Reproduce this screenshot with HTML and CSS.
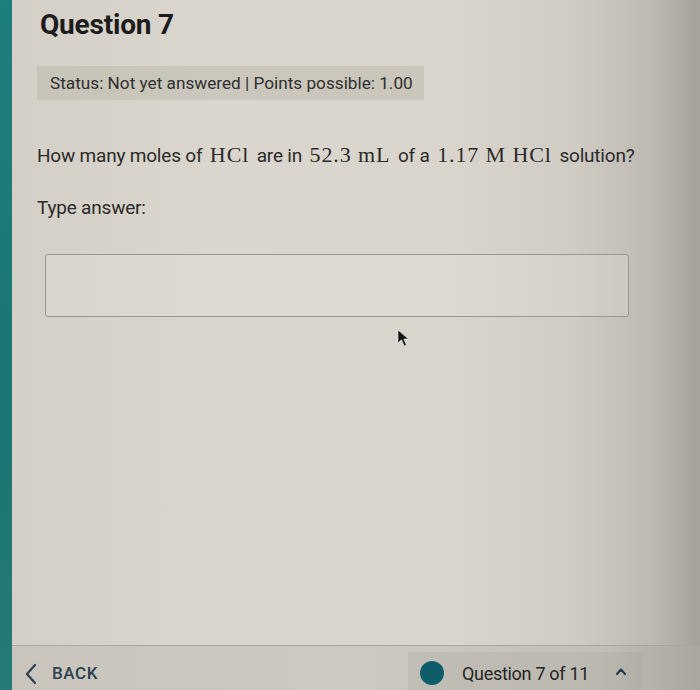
FILE: index.html
```html
<!DOCTYPE html>
<html>
<head>
<meta charset="utf-8">
<link rel="stylesheet" href="styles.css">
</head>
<body>
<div class="screen">
  <div class="strip"></div>
  <div class="main">
    <div class="content">
      <h1 class="title">Question 7</h1>
      <div class="status">Status: Not yet answered | Points possible: 1.00</div>
      <p class="question">How many moles of <span class="m">HCl</span> are in <span class="m">52.3 mL</span> of a <span class="m">1.17 M HCl</span> solution?</p>
      <p class="label">Type answer:</p>
      <div class="answer"></div>
      <svg class="cursor" width="14" height="18" viewBox="0 0 14 18"><path d="M1 1 L1 14 L4.5 10.8 L7.2 17 L9.4 16 L6.8 10 L11.5 10 Z" fill="#111" stroke="#eee" stroke-width="0.6"/></svg>
    </div>
    <div class="footer">
      <div class="back">
        <svg class="chev" width="14" height="22" viewBox="0 0 14 22"><path d="M11 2 L3 11 L11 20" fill="none" stroke="#2b3f4f" stroke-width="2.2" stroke-linecap="round" stroke-linejoin="round"/></svg>
        <span>BACK</span>
      </div>
      <div class="nav">
        <span class="dot"></span>
        <span class="qof">Question 7 of 11</span>
        <svg class="caret" width="12" height="8" viewBox="0 0 12 8"><path d="M2 7 L6 2.5 L10 7" fill="none" stroke="#1f3a4a" stroke-width="2" stroke-linecap="round" stroke-linejoin="round"/></svg>
      </div>
    </div>
  </div>
</div>
</body>
</html>
```

FILE: styles.css
```css
html, body {
  margin: 0;
  padding: 0;
}
body {
  width: 700px;
  height: 690px;
  overflow: hidden;
  font-family: Roboto, "Liberation Sans", sans-serif;
  color: #2a2a2a;
}
.screen {
  display: flex;
  width: 700px;
  height: 690px;
  background: linear-gradient(90deg, #d4cfc6 0%, #dbd6cd 30%, #dad5cc 65%, #d0ccc3 82%, #bdbab2 93%, #a4a19a 100%);
}
.strip {
  width: 12px;
  flex: none;
  background: linear-gradient(180deg, #1f7f7c 0%, #1b7572 60%, #257a76 100%);
}
.main {
  flex: 1;
  display: flex;
  flex-direction: column;
}
.content {
  flex: 1;
  position: relative;
  padding: 0 0 0 25px;
}
.title {
  margin: 9px 0 0 3px;
  font-size: 28px;
  font-weight: 700;
  color: #1c1c1c;
  line-height: 32px;
  letter-spacing: -0.2px;
}
.status {
  display: inline-block;
  margin-top: 25px;
  padding: 0 11px 0 13px;
  height: 34px;
  line-height: 35px;
  background: rgba(160, 160, 145, 0.28);
  font-size: 17.2px;
  color: #2f2f2f;
}
.question {
  margin: 42px 0 0 0;
  font-size: 19px;
  color: #2a2a2a;
  letter-spacing: -0.2px;
}
.m {
  font-family: "Liberation Serif", "DejaVu Serif", serif;
  font-size: 22px;
  letter-spacing: 0.9px;
  margin: 0 3px;
}
.label {
  margin: 28px 0 0 0;
  font-size: 19px;
  color: #2a2a2a;
  letter-spacing: -0.2px;
}
.answer {
  margin: 35px 0 0 8px;
  width: 582px;
  height: 61px;
  border: 1.5px solid #9a978f;
  border-radius: 3px;
  background: rgba(230, 226, 218, 0.25);
}
.cursor {
  position: absolute;
  left: 385px;
  top: 329px;
}
.footer {
  flex: none;
  height: 44px;
  border-top: 1.5px solid #aaa69f;
  background: linear-gradient(90deg, #c9c5bd 0%, #cdc9c1 50%, #c3c0b8 85%, #a9a69f 100%);
  display: flex;
  align-items: flex-end;
  justify-content: space-between;
}
.back {
  display: flex;
  align-items: center;
  height: 34px;
  margin-left: 12px;
  gap: 14px;
  color: #2b3f4f;
  font-size: 17px;
  font-weight: 500;
  letter-spacing: 0.6px;
}
.chev {
  margin-top: 1px;
}
.nav {
  display: flex;
  align-items: center;
  height: 38px;
  width: 235px;
  margin-right: 57px;
  background: rgba(150, 148, 140, 0.18);
  padding-left: 12px;
  padding-top: 4px;
  box-sizing: border-box;
}
.dot {
  width: 24px;
  height: 24px;
  border-radius: 50%;
  background: #0f5d6a;
  flex: none;
}
.qof {
  margin-left: 18px;
  font-size: 18px;
  color: #252525;
  letter-spacing: -0.3px;
}
.caret {
  margin-left: 26px;
  margin-top: -4px;
}
```
